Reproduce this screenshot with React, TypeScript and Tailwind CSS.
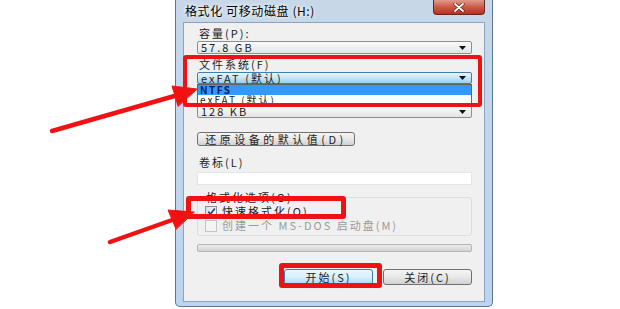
import React from "react";

function Arrow() {
  return (
    <svg width="7" height="4" viewBox="0 0 7 4" className="shrink-0">
      <polygon points="0,0 7,0 3.5,4" fill="#111" />
    </svg>
  );
}

function Combo({ text, focused, h = "h-[13px]" }: { text: string; focused?: boolean; h?: string }) {
  return (
    <div
      className={
        h +
        " rounded-[2px] border flex items-center justify-between pl-[3px] pr-[5px] text-[11px] leading-none " +
        (focused
          ? "border-[#3c7fb1] bg-gradient-to-b from-[#eaf6fd] via-[#c4e5f8] to-[#98cff2]"
          : "border-[#8e8e8e] bg-gradient-to-b from-[#fbfbfb] to-[#e4e4e4]")
      }
    >
      <span className="whitespace-pre">{text}</span>
      <Arrow />
    </div>
  );
}

function Label({ text }: { text: string }) {
  return <div className="h-[12px] leading-[12px] pl-[2px] whitespace-pre">{text}</div>;
}

function Check({ checked, disabled }: { checked?: boolean; disabled?: boolean }) {
  return (
    <div
      className={
        "w-[12px] h-[12px] border flex items-center justify-center shrink-0 " +
        (disabled
          ? "border-[#c4c4c4] bg-[#f4f4f4]"
          : "border-[#8e8f8f] bg-gradient-to-br from-[#dcdcdc] to-[#ffffff]")
      }
    >
      {checked && (
        <svg width="9" height="9" viewBox="0 0 9 9">
          <path d="M1.3 4.6 L3.4 7.2 L7.8 1.4" fill="none" stroke="#213f7c" strokeWidth="1.7" />
        </svg>
      )}
    </div>
  );
}

export default function App() {
  return (
    <div className="relative w-[620px] h-[309px] bg-white overflow-hidden flex items-start font-['Noto_Sans_CJK_SC','Noto_Sans',sans-serif] text-[#1c1c1c]">
      {/* dialog */}
      <div className="ml-[175px] w-[318px] h-[307px] flex flex-col border border-t-0 border-[#5c7590] rounded-b-[5px] bg-gradient-to-b from-[#c7d7e8] via-[#c0d6ee] to-[#bcd4ef] px-[7px] pb-[4px]">
        {/* title bar */}
        <div className="h-[22px] flex items-start justify-between">
          <div className="pl-[2px] pt-[4px] text-[12px] leading-[14px] tracking-[0.6px] text-black whitespace-pre [text-shadow:0_0_6px_#ffffff,0_0_3px_#ffffff]">
            格式化 可移动磁盘 (H:)
          </div>
          <div className="w-[52px] h-[15px] rounded-b-[4px] border border-t-0 border-[#5e2a24] bg-gradient-to-b from-[#e09a8c] via-[#cc5a47] to-[#b8301c] flex items-center justify-center">
            <svg width="12" height="9" viewBox="0 0 12 9">
              <path d="M2 1 L10 8 M10 1 L2 8" stroke="#5a2018" strokeWidth="3.2" strokeLinecap="round" />
              <path d="M2 1 L10 8 M10 1 L2 8" stroke="#ffffff" strokeWidth="1.8" strokeLinecap="round" />
            </svg>
          </div>
        </div>

        {/* client */}
        <div className="flex-1 bg-[#f0f0f0] border border-[#8aa3bf] flex flex-col pl-[13px] pr-[12px] text-[11px] tracking-[2px]">
          <div className="mt-[4px]">
            <Label text="容量(P):" />
          </div>
          <div className="mt-[2px]">
            <Combo text="57.8 GB" />
          </div>
          <div className="mt-[4px]">
            <Label text="文件系统(F)" />
          </div>
          <div className="mt-[2px] relative z-10">
            <Combo text="exFAT (默认)" focused h="h-[12px]" />
            <div className="absolute left-0 right-0 top-full h-[21px] border border-[#646464] bg-white flex flex-col text-[10px] leading-[10px]">
              <div className="h-[10px] bg-[#3399ff] text-[#0b1f5c] pl-[2px] tracking-[1.5px] font-semibold">NTFS</div>
              <div className="h-[9px] pl-[2px] whitespace-pre">exFAT (默认)</div>
            </div>
          </div>
          {/* label hidden under the open list */}
          <div className="mt-[4px] h-[15px]" />
          <div className="mt-[2px]">
            <Combo text="128 KB" />
          </div>
          <div className="mt-[14px] w-[158px] h-[14px] rounded-[3px] border border-[#707070] bg-gradient-to-b from-[#f4f4f4] via-[#e8e8e8] to-[#d2d2d2] flex items-center justify-center leading-none tracking-[3.5px] whitespace-pre">
            还原设备的默认值(D)
          </div>
          <div className="mt-[10px]">
            <Label text="卷标(L)" />
          </div>
          <div className="mt-[4px] h-[13px] bg-white border border-[#e2e6ea]" />
          <div className="mt-[12px] relative h-[39px] border border-[#d9dee3] rounded-[3px] flex flex-col pl-[7px] pt-[7px] gap-[1px]">
            <div className="absolute left-[7px] top-[-7px] h-[12px] leading-[12px] bg-[#f0f0f0] px-[1px] whitespace-pre">
              格式化选项(O)
            </div>
            <div className="flex items-center gap-[5px] h-[13px]">
              <Check checked />
              <span className="leading-none whitespace-pre">快速格式化(Q)</span>
            </div>
            <div className="flex items-center gap-[5px] h-[13px] text-[#9a9a9a]">
              <Check disabled />
              <span className="leading-none whitespace-pre">创建一个 MS-DOS 启动盘(M)</span>
            </div>
          </div>
          <div className="mt-[8px] h-[8px] rounded-[2px] border border-[#b5b5b5] bg-gradient-to-b from-[#ececec] to-[#d4d4d4]" />
          <div className="mt-[17px] flex justify-end gap-[10px] leading-none">
            <div className="w-[89px] h-[16px] rounded-[3px] border border-[#3c7fb1] bg-gradient-to-b from-[#eaf6fd] via-[#d9f0fc] to-[#a9dbf6] flex items-center justify-center whitespace-pre">
              开始(S)
            </div>
            <div className="w-[89px] h-[16px] rounded-[3px] border border-[#707070] bg-gradient-to-b from-[#f4f4f4] via-[#e8e8e8] to-[#d2d2d2] flex items-center justify-center whitespace-pre">
              关闭(C)
            </div>
          </div>
        </div>
      </div>

      {/* red highlight boxes */}
      <div className="absolute left-[183px] top-[55px] w-[299px] h-[52px] border-[4px] border-[#f01212] rounded-[3px] z-20" />
      <div className="absolute left-[186px] top-[196px] w-[160px] h-[23px] border-[5px] border-[#f01212] rounded-[3px] z-20" />
      <div className="absolute left-[279px] top-[263px] w-[103px] h-[25px] border-[5px] border-[#f01212] rounded-[3px] z-20" />

      {/* red arrows */}
      <svg className="absolute left-0 top-0 z-30 pointer-events-none" width="620" height="309" viewBox="0 0 620 309">
        <g fill="#f01212" stroke="#f01212" strokeLinecap="round" strokeLinejoin="round">
          <line x1="52" y1="131" x2="178" y2="95" strokeWidth="4.5" />
          <polygon points="197,89 172,86 178,106" strokeWidth="1" />
          <line x1="110" y1="242" x2="175" y2="219" strokeWidth="4.5" />
          <polygon points="194,212 168,210 176,229" strokeWidth="1" />
        </g>
      </svg>
    </div>
  );
}
